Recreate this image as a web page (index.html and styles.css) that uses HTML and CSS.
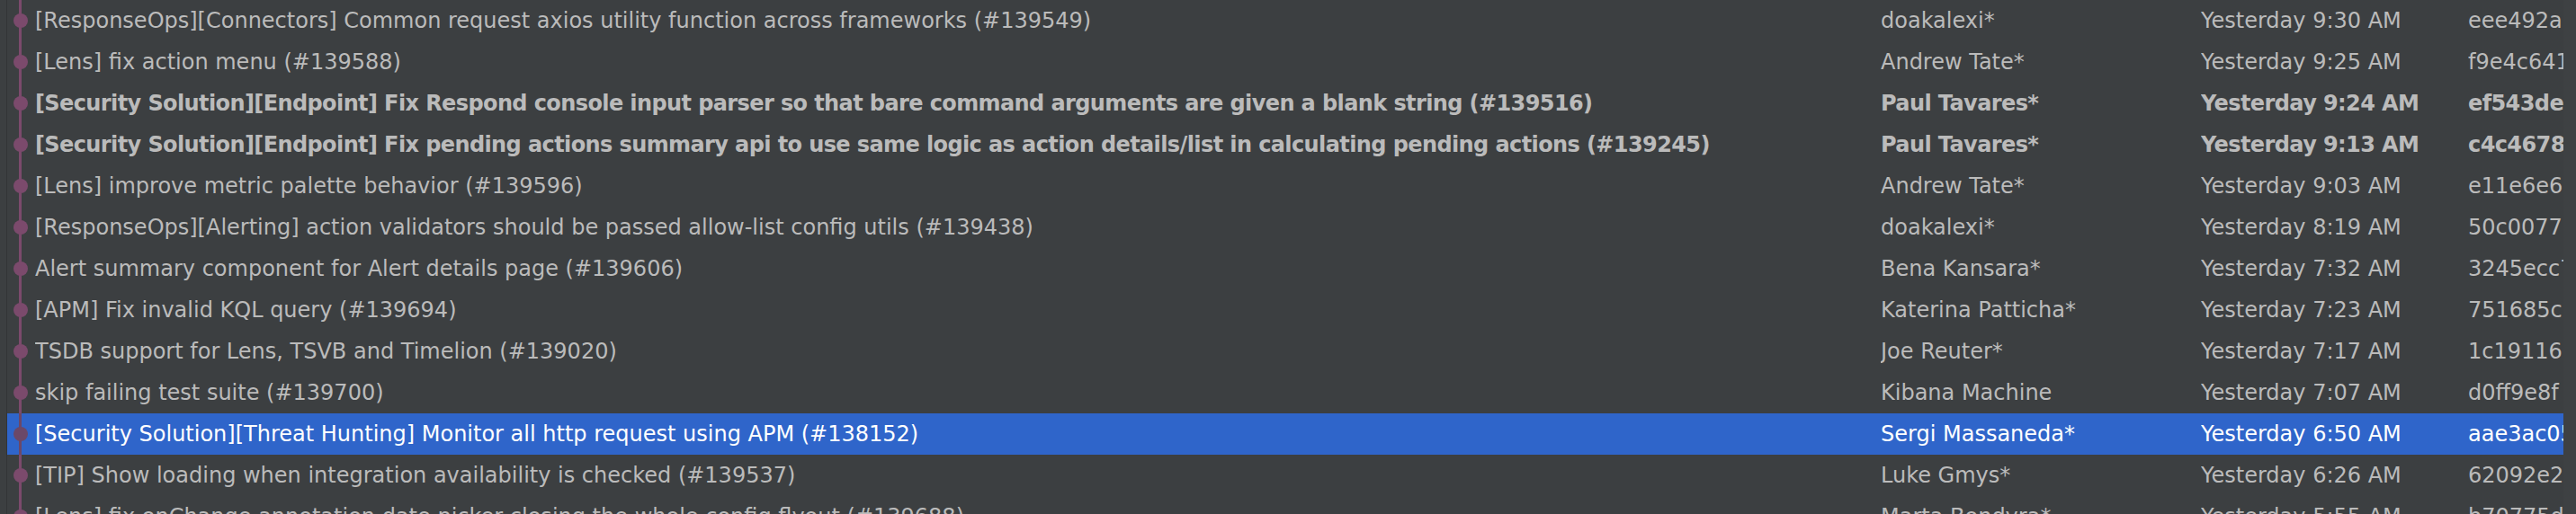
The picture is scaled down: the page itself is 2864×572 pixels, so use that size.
FILE: index.html
```html
<!DOCTYPE html>
<html>
<head>
<meta charset="utf-8">
<link rel="stylesheet" href="styles.css">
</head>
<body>
<div class="panel">
  <div class="gutter"></div>
  <div class="log">
    <div class="row"><div class="graph"><span class="dot"></span></div><div class="msg">[ResponseOps][Connectors] Common request axios utility function across frameworks (#139549)</div><div class="author">doakalexi*</div><div class="date">Yesterday 9:30 AM</div><div class="hash">eee492a3</div></div>
    <div class="row"><div class="graph"><span class="dot"></span></div><div class="msg">[Lens] fix action menu (#139588)</div><div class="author">Andrew Tate*</div><div class="date">Yesterday 9:25 AM</div><div class="hash">f9e4c641</div></div>
    <div class="row bold"><div class="graph"><span class="dot"></span></div><div class="msg">[Security Solution][Endpoint] Fix Respond console input parser so that bare command arguments are given a blank string (#139516)</div><div class="author">Paul Tavares*</div><div class="date">Yesterday 9:24 AM</div><div class="hash">ef543de2</div></div>
    <div class="row bold"><div class="graph"><span class="dot"></span></div><div class="msg">[Security Solution][Endpoint] Fix pending actions summary api to use same logic as action details/list in calculating pending actions (#139245)</div><div class="author">Paul Tavares*</div><div class="date">Yesterday 9:13 AM</div><div class="hash">c4c46789</div></div>
    <div class="row"><div class="graph"><span class="dot"></span></div><div class="msg">[Lens] improve metric palette behavior (#139596)</div><div class="author">Andrew Tate*</div><div class="date">Yesterday 9:03 AM</div><div class="hash">e11e6e6b</div></div>
    <div class="row"><div class="graph"><span class="dot"></span></div><div class="msg">[ResponseOps][Alerting] action validators should be passed allow-list config utils (#139438)</div><div class="author">doakalexi*</div><div class="date">Yesterday 8:19 AM</div><div class="hash">50c00771</div></div>
    <div class="row"><div class="graph"><span class="dot"></span></div><div class="msg">Alert summary component for Alert details page (#139606)</div><div class="author">Bena Kansara*</div><div class="date">Yesterday 7:32 AM</div><div class="hash">3245ecc7</div></div>
    <div class="row"><div class="graph"><span class="dot"></span></div><div class="msg">[APM] Fix invalid KQL query (#139694)</div><div class="author">Katerina Patticha*</div><div class="date">Yesterday 7:23 AM</div><div class="hash">751685c2</div></div>
    <div class="row"><div class="graph"><span class="dot"></span></div><div class="msg">TSDB support for Lens, TSVB and Timelion (#139020)</div><div class="author">Joe Reuter*</div><div class="date">Yesterday 7:17 AM</div><div class="hash">1c191166</div></div>
    <div class="row"><div class="graph"><span class="dot"></span></div><div class="msg">skip failing test suite (#139700)</div><div class="author">Kibana Machine</div><div class="date">Yesterday 7:07 AM</div><div class="hash">d0ff9e8f</div></div>
    <div class="row selected"><div class="graph"><span class="dot"></span></div><div class="msg">[Security Solution][Threat Hunting] Monitor all http request using APM (#138152)</div><div class="author">Sergi Massaneda*</div><div class="date">Yesterday 6:50 AM</div><div class="hash">aae3ac05</div></div>
    <div class="row"><div class="graph"><span class="dot"></span></div><div class="msg">[TIP] Show loading when integration availability is checked (#139537)</div><div class="author">Luke Gmys*</div><div class="date">Yesterday 6:26 AM</div><div class="hash">62092e2a</div></div>
    <div class="row"><div class="graph"><span class="dot"></span></div><div class="msg">[Lens] fix onChange annotation date picker closing the whole config flyout (#139688)</div><div class="author">Marta Bondyra*</div><div class="date">Yesterday 5:55 AM</div><div class="hash">b70775d1</div></div>
  </div>
  <div class="scroll"></div>
</div>
</body>
</html>
```
FILE: styles.css
```css
html, body {
  margin: 0;
  padding: 0;
  background: #3c3f41;
  height: 572px;
  overflow: hidden;
}
.panel {
  display: flex;
  height: 572px;
  overflow: hidden;
}
.gutter {
  width: 7px;
  flex: none;
  background: #3c3f41;
  border-right: 1px solid #323436;
}
.log {
  width: 2842px;
  flex: none;
  overflow: hidden;
}
.scroll {
  flex: 1;
  background: #3e4143;
}
.row {
  display: grid;
  grid-template-columns: 31px 2052px 356px 297px 106px;
  height: 46px;
  align-items: center;
  font-family: "DejaVu Sans", Verdana, sans-serif;
  font-size: 24px;
  line-height: 46px;
  color: #bbbbbb;
  white-space: nowrap;
}
.row.bold {
  font-weight: bold;
  letter-spacing: -0.6px;
}
.row.selected {
  background: #2f65ca;
  color: #ffffff;
}
.graph {
  height: 46px;
  display: flex;
  align-items: center;
  padding-left: 7px;
  background: linear-gradient(to right, transparent 13px, #7b4a6c 13px, #7b4a6c 16px, transparent 16px);
}
.dot {
  width: 16px;
  height: 16px;
  border-radius: 50%;
  background: #7b4a6c;
}
.selected .graph {
  background: linear-gradient(to right, transparent 13px, #6b4868 13px, #6b4868 16px, transparent 16px);
}
.selected .dot {
  background: #6b4868;
}
.msg, .author, .date, .hash {
  overflow: hidden;
}
```
